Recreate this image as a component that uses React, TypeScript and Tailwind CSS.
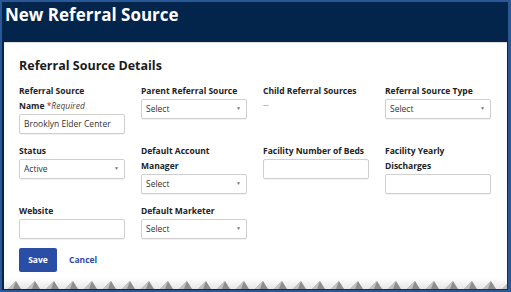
import React from 'react';

const Label: React.FC<{ children: React.ReactNode }> = ({ children }) => (
  <div className="text-[8.5px] leading-[15px] font-bold text-[#222] mb-px">{children}</div>
);

const TextInput: React.FC<{ value?: string }> = ({ value }) => (
  <div className="h-[20px] w-full rounded-[2px] border border-[#cfcfcf] bg-white px-[4px] flex items-center text-[8.5px] text-[#333] shadow-[0_1px_1px_rgba(0,0,0,0.06)]">
    {value}
  </div>
);

const Select: React.FC<{ value?: string }> = ({ value = 'Select' }) => (
  <div className="h-[20px] w-full rounded-[2px] border border-[#cfcfcf] bg-white pl-[4px] pr-[5px] flex items-center justify-between text-[8.5px] text-[#333] shadow-[0_1px_1px_rgba(0,0,0,0.06)]">
    <span>{value}</span>
    <span className="text-[5px] text-[#777]">▼</span>
  </div>
);

const Zigzag = () => (
  <svg className="w-full h-[11px] block" xmlns="http://www.w3.org/2000/svg">
    <defs>
      <linearGradient id="band" x1="0" y1="0" x2="0" y2="1">
        <stop offset="0" stopColor="#ffffff" />
        <stop offset="1" stopColor="#e6e6e6" />
      </linearGradient>
      <pattern id="teeth" x="1" y="0" width="19" height="11" patternUnits="userSpaceOnUse">
        <polygon points="3,11 11,3 16,11" fill="#8e8e8e" />
        <polygon points="3,11 11,3 8,11" fill="#c2c2c2" />
      </pattern>
    </defs>
    <rect width="100%" height="11" fill="url(#band)" />
    <rect width="100%" height="11" fill="url(#teeth)" />
  </svg>
);

export default function App() {
  return (
    <div className="w-[511px] h-[292px] overflow-hidden bg-[#2a5897] pt-[2px] pl-[2px] pr-[3px] pb-[2px] font-['Open_Sans',sans-serif]">
      <div className="h-full flex flex-col bg-[#03244b] bg-[linear-gradient(160deg,#03244b_70%,#0a3566_100%)]">
        <div className="h-[40px] pl-[3px] pt-[1px] text-white font-bold text-[17px] leading-[24px]">
          New Referral Source
        </div>
        <div className="flex-1 ml-[2px] mr-[1px] mb-[1px] bg-white flex flex-col shadow-[inset_0_1px_1px_rgba(0,0,0,0.15)]">
          <div className="flex-1 px-[15px] pt-[14px]">
            <h2 className="text-[12.5px] leading-[20px] font-bold text-[#1b1b1b]">Referral Source Details</h2>
            <div className="mt-[7px] grid grid-cols-[106px_106px_106px_106px] gap-x-[16px] gap-y-[9px]">
              <div>
                <Label>
                  Referral Source<br />
                  Name <span className="text-[#d0021b] font-normal">*</span>
                  <span className="italic font-normal text-[#444]">Required</span>
                </Label>
                <TextInput value="Brooklyn Elder Center" />
              </div>
              <div>
                <Label>Parent Referral Source</Label>
                <Select />
              </div>
              <div>
                <Label>Child Referral Sources</Label>
                <div className="text-[8.5px] text-[#888] leading-[12px]">--</div>
              </div>
              <div>
                <Label>Referral Source Type</Label>
                <Select />
              </div>

              <div>
                <Label>Status</Label>
                <Select value="Active" />
              </div>
              <div>
                <Label>Default Account<br />Manager</Label>
                <Select />
              </div>
              <div>
                <Label>Facility Number of Beds</Label>
                <TextInput />
              </div>
              <div>
                <Label>Facility Yearly<br />Discharges</Label>
                <TextInput />
              </div>

              <div>
                <Label>Website</Label>
                <TextInput />
              </div>
              <div>
                <Label>Default Marketer</Label>
                <Select />
              </div>
            </div>
            <div className="mt-[9px] flex items-center gap-[12px]">
              <button className="h-[24px] w-[38px] rounded-[2px] bg-[#2a4ea6] text-white text-[8.5px] font-bold">Save</button>
              <button className="text-[#2a4ea6] text-[8.5px] font-bold">Cancel</button>
            </div>
          </div>
          <Zigzag />
        </div>
      </div>
    </div>
  );
}
